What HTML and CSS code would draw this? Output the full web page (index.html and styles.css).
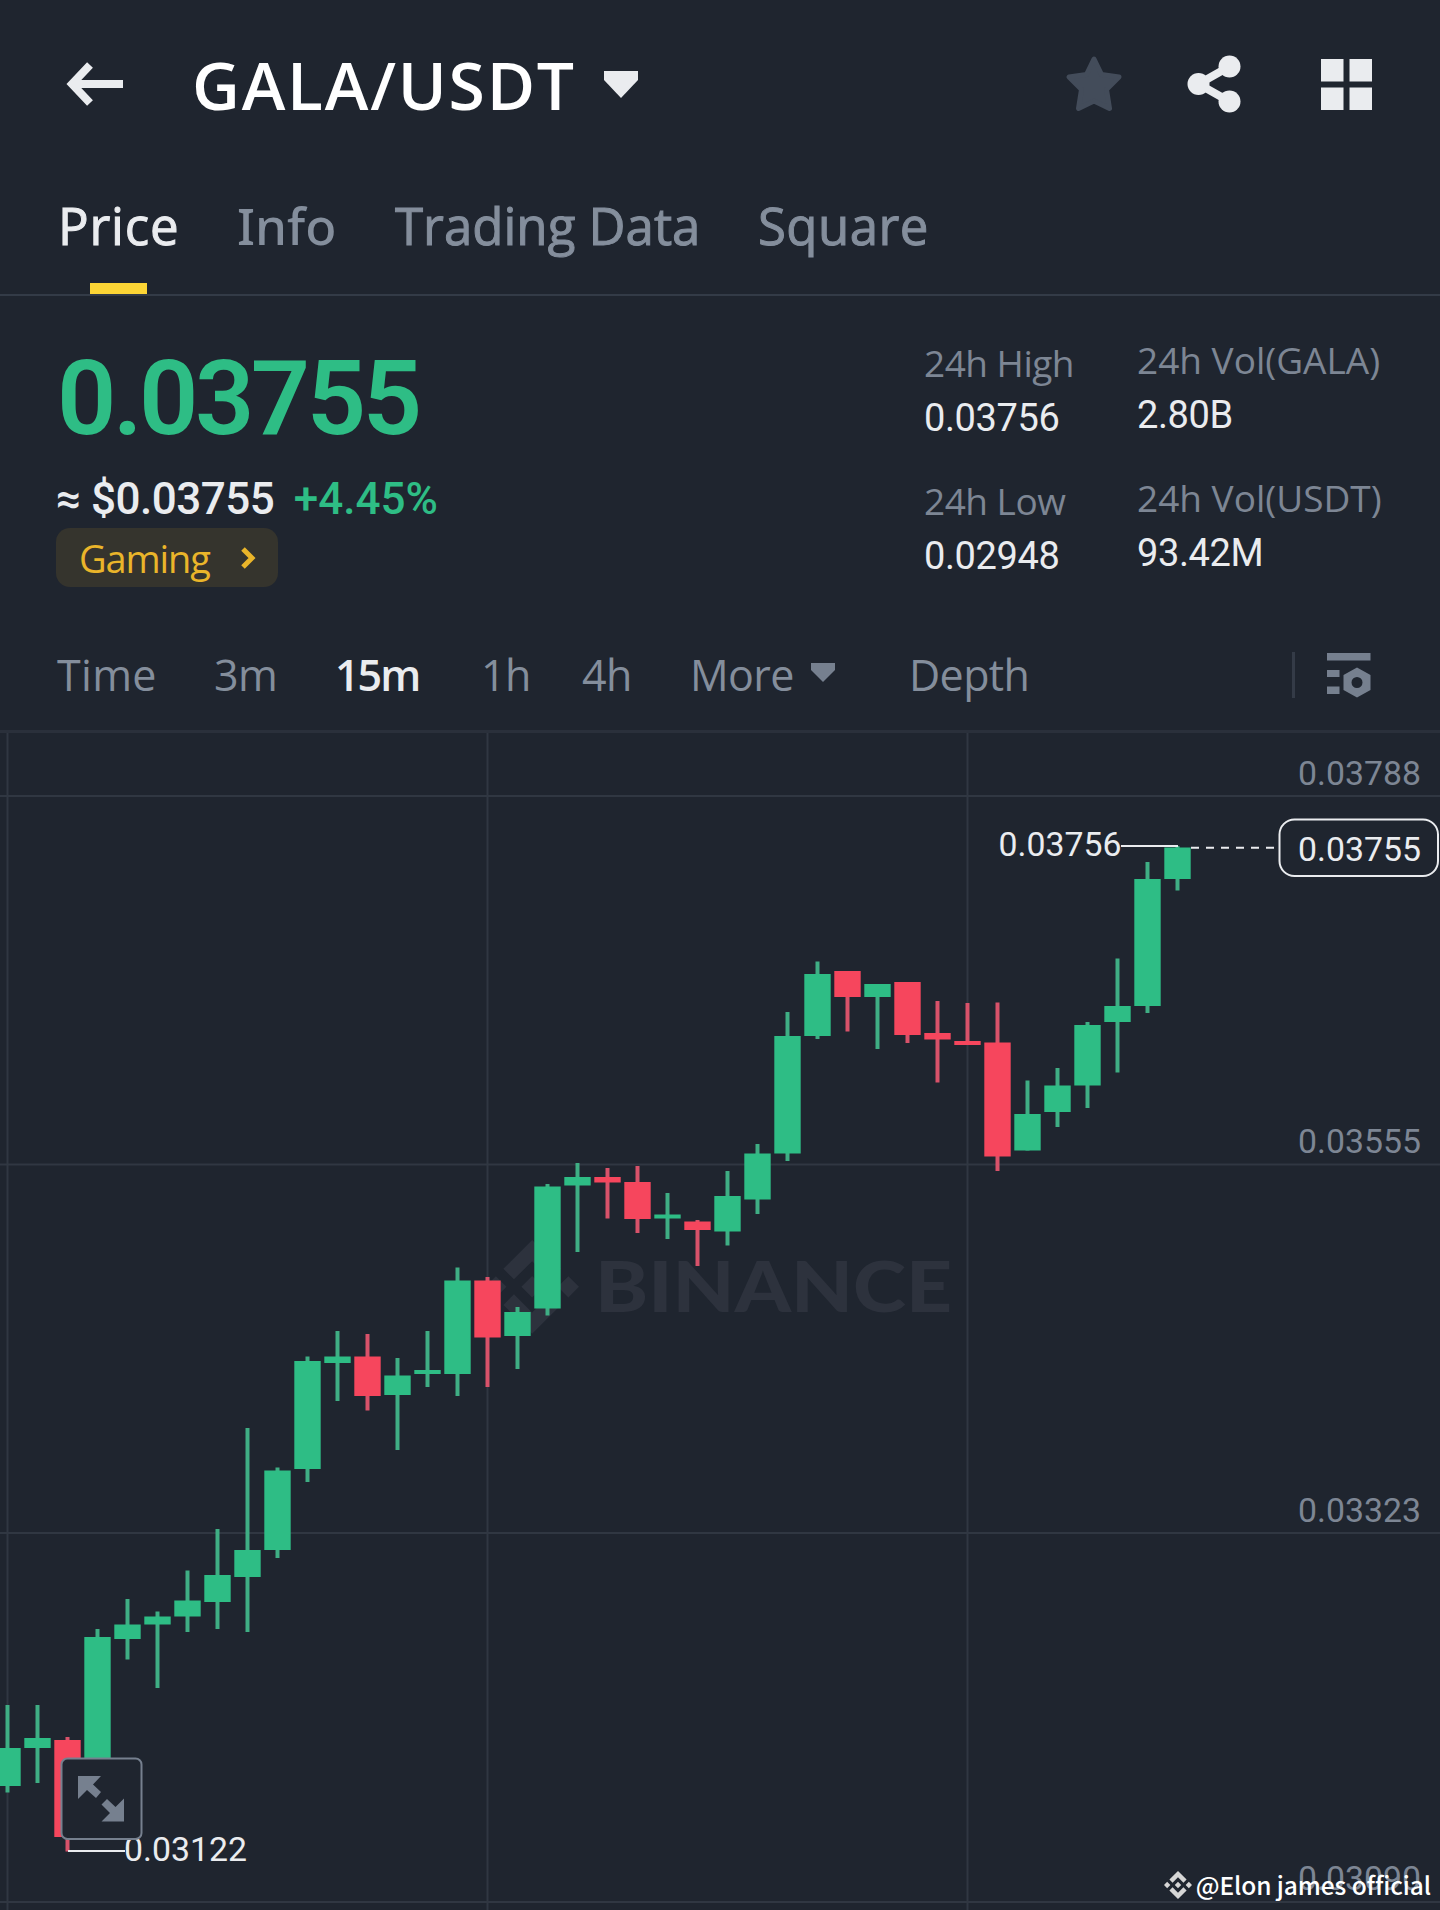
FILE: index.html
```html
<!DOCTYPE html>
<html lang="en">

<head>
    <meta charset="utf-8">
    <title>GALA/USDT</title>
    <link rel="stylesheet" href="styles.css">
</head>

<body>
    <header>
        <svg class="back" width="58" height="44" viewBox="0 0 58 44"><path d="M24 3L6 22L24 41M6 22H57" /></svg>
        <h1>GALA/USDT</h1>
        <svg class="caret" width="34" height="27" viewBox="0 0 34 27"><path d="M0 0H34V9L17 27L0 9Z" /></svg>
        <div class="actions">
            <svg class="star" width="58" height="58" viewBox="0 0 58 58"><path d="M29 4L36.5 19.5L54 22L41.5 34.5L44.5 53.5L29 46L13.5 53.5L16.5 34.5L4 22L21.500 19.500Z" /></svg>
            <svg class="share" width="54" height="58" viewBox="0 0 54 58">
                <path d="M42.500 11.500L11.500 29L42.500 46.500" />
                <circle cx="42.500" cy="11.500" r="11" /><circle cx="11.500" cy="29" r="11" /><circle cx="42.500" cy="46.500" r="11" />
            </svg>
            <svg class="apps" width="51" height="51" viewBox="0 0 51 51"><path d="M0 0H22.500V22.500H0ZM28.500 0H51V22.500H28.500ZM0 28.500H22.500V51H0ZM28.500 28.500H51V51H28.500Z" /></svg>
        </div>
    </header>

    <nav class="tabs">
        <div><a class="active">Price</a></div>
        <div><a class="info">Info</a></div>
        <div><a class="data">Trading Data</a></div>
        <div><a>Square</a></div>
    </nav>

    <section class="ticker">
        <div class="last">
            <div class="price">0.03755</div>
            <div class="fiat">≈ $0.03755 <span>+4.45%</span></div>
            <div class="badge">Gaming
                <svg width="16" height="22" viewBox="0 0 16 22"><path d="M3 2L12 11L3 20" /></svg>
            </div>
        </div>
        <dl>
            <dt>24h High</dt>
            <dd>0.03756</dd>
            <dt>24h Low</dt>
            <dd>0.02948</dd>
        </dl>
        <dl class="volume">
            <dt>24h Vol(GALA)</dt>
            <dd>2.80B</dd>
            <dt>24h Vol(USDT)</dt>
            <dd>93.42M</dd>
        </dl>
    </section>

    <nav class="intervals">
        <a>Time</a>
        <a>3m</a>
        <a class="active">15m</a>
        <a>1h</a>
        <a>4h</a>
        <a class="more">More <svg width="24" height="19" viewBox="0 0 24 19"><path d="M0 0H24V7L12 19L0 7Z" /></svg></a>
        <a>Depth</a>
        <div class="settings">
            <svg width="44" height="46" viewBox="0 0 44 46">
                <path d="M0 1H43.500V8.500H0ZM0 18H12.500V25H0ZM0 34.500H12.500V42H0Z" />
                <path fill-rule="evenodd" d="M30 15.500L43.500 23V38L30 45.500L16.500 38V23ZM30 25A5.500 5.500 0 1 0 30 36A5.500 5.500 0 1 0 30 25Z" />
            </svg>
        </div>
    </nav>

    <main>
        <svg id="chart" width="1440" height="1177" viewBox="0 733 1440 1177">
            <path class="grid" d="M7.500 733V1910M487.500 733V1910M967.500 733V1910M0 796H1440M0 1164.500H1440M0 1533H1440M0 1902H1440" />
            <g class="watermark">
                <path transform="translate(485.300 1240) scale(.74)" d="M38.730 53.200L63.320 28.620L87.920 53.220L102.220 38.910L63.320 0L24.420 38.900ZM0 63.310L14.300 49L28.610 63.310L14.300 77.610ZM38.730 73.410L63.320 98L87.920 73.400L102.230 87.690L63.330 126.600L24.420 87.720ZM98 63.310L112.300 49L126.610 63.300L112.300 77.620ZM77.830 63.300L63.320 48.780L48.810 63.280L63.320 77.780Z" />
                <text x="595" y="1312" textLength="357" lengthAdjust="spacingAndGlyphs">BINANCE</text>
            </g>
            <g id="candles"></g>
            <g class="axis">
                <text x="1298" y="784.500">0.03788</text>
                <text x="1298" y="1152.500">0.03555</text>
                <text x="1298" y="1521.500">0.03323</text>
                <text x="1298" y="1889.500">0.03090</text>
            </g>
            <g class="marks">
                <text x="998.500" y="855.500">0.03756</text>
                <path d="M1121 846H1178M68 1851H125" />
                <path class="dash" d="M1191 847.700H1276" />
                <rect x="1279.500" y="819.500" width="158.500" height="56.500" rx="15" />
                <text x="1298" y="861">0.03755</text>
                <text x="124" y="1861">0.03122</text>
            </g>
            <g class="expand">
                <rect x="61.500" y="1758.500" width="80" height="80.500" rx="6" />
                <path d="M78 1776H101L93 1784.500L101 1792L96 1798L87 1790L78 1799ZM124 1821.500V1798.500L115.500 1807L107 1799L101.500 1804.500L110 1813L101.500 1821.500Z" />
            </g>
        </svg>
        <div class="author">
            <svg width="28" height="28" viewBox="0 0 126.610 126.610"><path d="M38.730 53.200L63.320 28.620L87.920 53.220L102.220 38.910L63.320 0L24.420 38.900ZM0 63.310L14.300 49L28.610 63.310L14.300 77.610ZM38.730 73.410L63.320 98L87.920 73.400L102.230 87.690L63.330 126.600L24.420 87.720ZM98 63.310L112.300 49L126.610 63.300L112.300 77.620ZM77.830 63.300L63.320 48.780L48.810 63.280L63.320 77.780Z" /></svg>
            <span>@Elon james official</span>
        </div>
    </main>

    <script>
        // direction, wick top, body top, body bottom, wick bottom
        var candles = [
            ["up", 1705, 1748, 1786, 1792.5],
            ["up", 1705, 1738, 1748, 1783],
            ["down", 1737, 1740, 1837, 1851.5],
            ["up", 1629, 1637, 1800, 1800],
            ["up", 1599, 1624.5, 1639, 1659.5],
            ["up", 1611.5, 1616.5, 1624.5, 1688],
            ["up", 1570.5, 1600.5, 1616.5, 1632],
            ["up", 1529, 1575, 1602, 1629],
            ["up", 1428, 1550, 1577, 1632],
            ["up", 1467.5, 1470.5, 1550, 1558],
            ["up", 1356.5, 1361, 1469, 1482],
            ["up", 1331, 1356.5, 1363, 1401],
            ["down", 1334, 1356.5, 1396, 1410.5],
            ["up", 1358, 1375.5, 1395, 1450],
            ["up", 1331, 1370, 1374, 1387],
            ["up", 1267.5, 1280.5, 1374, 1396],
            ["down", 1277, 1280.5, 1337.5, 1387],
            ["up", 1307, 1312, 1336, 1369],
            ["up", 1184, 1186.5, 1308.5, 1315.5],
            ["up", 1163, 1177, 1185.5, 1252],
            ["down", 1168, 1177, 1182.5, 1218.5],
            ["down", 1166, 1182, 1219, 1233],
            ["up", 1193, 1214.5, 1218.5, 1239],
            ["down", 1220, 1221.5, 1230, 1266],
            ["up", 1171, 1196, 1231.5, 1245.5],
            ["up", 1144, 1153.5, 1199.5, 1214],
            ["up", 1012, 1036, 1153.5, 1161],
            ["up", 961.5, 974, 1036, 1039],
            ["down", 971, 971, 997, 1031.5],
            ["up", 984, 984, 997, 1049],
            ["down", 982, 982, 1035, 1043],
            ["down", 1001, 1033, 1039.5, 1082.5],
            ["down", 1003, 1041, 1045, 1045],
            ["down", 1002.5, 1042.5, 1156.5, 1171],
            ["up", 1080.5, 1114, 1150.5, 1150.5],
            ["up", 1068, 1085.5, 1112, 1127],
            ["up", 1022, 1025, 1085.5, 1108],
            ["up", 958.5, 1006, 1022, 1072.5],
            ["up", 862, 879, 1006, 1013],
            ["up", 846, 847.5, 879, 890.5]
        ];

        var html = "";
        for (var i = 0; i < candles.length; i++) {
            var c = candles[i];
            var x = 7.5 + i * 30;
            html += '<g class="' + c[0] + '">' +
                '<rect class="wick" x="' + (x - 2) + '" y="' + c[1] + '" width="4" height="' + (c[4] - c[1]) + '"/>' +
                '<rect x="' + (x - 13.2) + '" y="' + c[2] + '" width="26.400" height="' + (c[3] - c[2]) + '"/></g>';
        }
        document.getElementById("candles").innerHTML = html;
    </script>
</body>

</html>
```
FILE: styles.css
```css
* {
    box-sizing: border-box;
}

body {
    margin: 0;
    width: 1440px;
    color: #eaecef;
    background-color: #1f252f;
    font-family: "Open Sans", "Noto Sans", sans-serif;
}

svg {
    display: block;
    flex: none;
    fill: currentColor;
}

header {
    display: flex;
    align-items: center;
    height: 168px;
    padding: 0 68px 0 66px;
}

h1 {
    margin: 0 0 0 68px;
    width: 412px;
    color: #fff;
    font-size: 66px;
    font-weight: 600;
    line-height: 80px;
    letter-spacing: 1.8px;
}

.back {
    fill: none;
    stroke: currentColor;
    stroke-width: 8px;
}

.actions {
    display: flex;
    align-items: center;
    margin-left: auto;
}

.star {
    margin-right: 64px;
    color: #434c5a;
    stroke: currentColor;
    stroke-width: 5px;
    stroke-linejoin: round;
}

.share {
    margin-right: 80px;
}

.share path {
    fill: none;
    stroke: currentColor;
    stroke-width: 8px;
}

.tabs {
    display: grid;
    grid-template-columns: 179px 158px 363px auto;
    height: 128px;
    padding: 22px 0 0 58px;
    border-bottom: 2px solid #333b47;
    color: #848e9c;
    font-size: 51px;
    font-weight: 500;
    line-height: 70px;
}

.tabs a {
    display: inline-block;
    letter-spacing: 0.4px;
    -webkit-text-stroke: 1px currentColor;
}

.tabs .info {
    font-family: "Noto Sans", sans-serif;
    letter-spacing: 0;
    -webkit-text-stroke: 0;
}

.tabs .data {
    letter-spacing: 0;
}

.tabs .active {
    color: #eaecef;
    letter-spacing: 0.8px;
}

.tabs .active::after {
    content: "";
    display: block;
    width: 57px;
    height: 11px;
    margin: 23px auto 0;
    background-color: #fcd535;
}

.ticker {
    display: flex;
    height: 321px;
    padding: 40px 0 0 56px;
}

.last {
    width: 868px;
    padding-top: 8px;
    font-family: Roboto, sans-serif;
}

.price {
    margin-left: 1px;
    color: #2ebd85;
    font-size: 104px;
    font-weight: 600;
    line-height: 110px;
    letter-spacing: -3.5px;
}

.fiat {
    margin-top: 17px;
    font-size: 44px;
    font-weight: 500;
    line-height: 57px;
    letter-spacing: -0.5px;
    white-space: nowrap;
}

.fiat span {
    margin-left: 9px;
    color: #2ebd85;
    letter-spacing: 0;
}

.badge {
    display: flex;
    align-items: center;
    justify-content: space-between;
    width: 222px;
    height: 59px;
    padding: 0 22px 0 23px;
    border-radius: 14px;
    color: #eab52a;
    background-color: #35342d;
    font-family: "Open Sans", sans-serif;
    font-size: 38px;
    letter-spacing: -1.1px;
}

.badge svg {
    fill: none;
    stroke: currentColor;
    stroke-width: 5px;
}

dl {
    width: 213px;
    margin: 0;
    font-size: 37px;
    line-height: 54px;
    white-space: nowrap;
}

dt {
    color: #7d8694;
    letter-spacing: -0.5px;
}

dd {
    margin: 1px 0 29px;
    font-family: Roboto, sans-serif;
    font-size: 38px;
    letter-spacing: -0.4px;
}

.volume {
    margin-top: -3px;
}

.volume dt {
    letter-spacing: 0;
}

.intervals {
    display: grid;
    grid-template-columns: 157px 121px 146px 101px 108px 219px 1fr auto;
    align-items: center;
    height: 116px;
    padding: 2px 69px 0 57px;
    border-bottom: 3px solid #2a303b;
    color: #848e9c;
    font-size: 43px;
    letter-spacing: -0.6px;
}

.intervals a:first-child {
    letter-spacing: 0.3px;
}

.intervals .active {
    color: #eaecef;
    font-weight: 600;
    letter-spacing: -2px;
}

.more {
    display: flex;
    align-items: center;
    gap: 17px;
}

.more svg {
    margin-bottom: 4px;
    color: #76808f;
}

.settings {
    padding-left: 32px;
    border-left: 3px solid #343b47;
    color: #76808f;
}

main {
    position: relative;
    height: 1177px;
    overflow: hidden;
}

.grid {
    stroke: #303742;
    stroke-width: 2px;
}

.watermark {
    fill: #2d323d;
    font-family: Lato, sans-serif;
    font-size: 71px;
    font-weight: 900;
}

.up {
    fill: #2ebd85;
}

.down {
    fill: #f6465d;
}

.up .wick {
    fill: #3fae84;
}

.down .wick {
    fill: #d8526a;
}

.axis,
.marks {
    font-family: Roboto, sans-serif;
    font-size: 33.8px;
}

.axis {
    fill: #7d8694;
}

.marks text {
    fill: #eaecef;
}

.marks path,
.marks rect {
    fill: none;
    stroke: #eaecef;
    stroke-width: 2px;
}

.marks .dash {
    stroke-dasharray: 8px 7px;
}

.expand {
    fill: #76808f;
}

.expand rect {
    fill: #1f252f;
    stroke: #76808f;
    stroke-width: 2px;
}

.author {
    position: absolute;
    right: 9px;
    bottom: 7px;
    display: flex;
    align-items: center;
    gap: 4px;
    color: #fff;
    font-family: "Noto Sans CJK SC", sans-serif;
    font-size: 24.5px;
    font-weight: 500;
    line-height: 36px;
    letter-spacing: -0.1px;
}

.author svg {
    color: #d6d6d6;
}
```
